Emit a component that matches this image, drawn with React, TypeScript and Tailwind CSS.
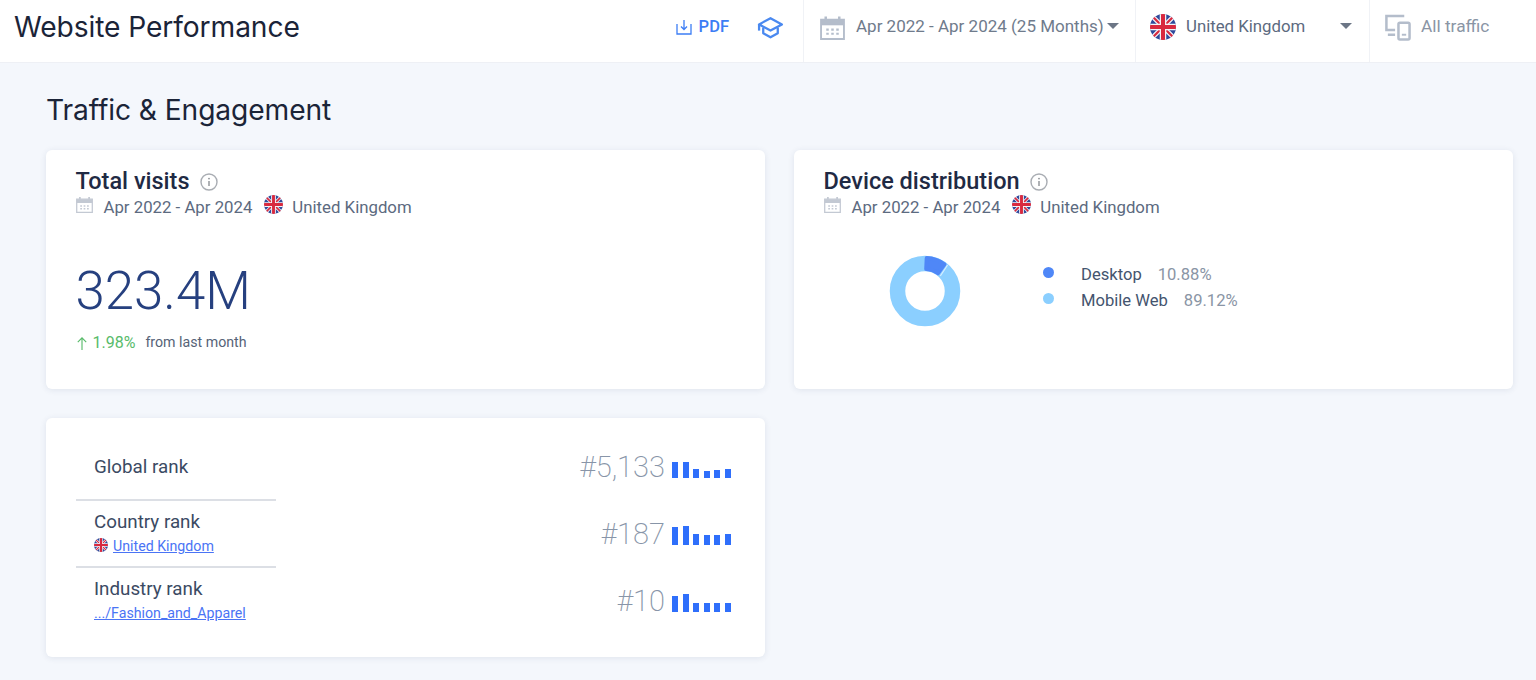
import React from "react";

function UkFlag({ className }: { className: string }) {
  return (
    <svg viewBox="0 0 26 26" className={`rounded-full shrink-0 ${className}`}>
      <rect width="26" height="26" fill="#2f4a9b" />
      <path d="M0 0L26 26M26 0L0 26" stroke="#f3f4f8" strokeWidth="4.5" />
      <path d="M0 0L26 26M26 0L0 26" stroke="#d8293f" strokeWidth="2.2" />
      <path d="M13 0V26M0 13H26" stroke="#f3f4f8" strokeWidth="6.5" />
      <path d="M13 0V26M0 13H26" stroke="#d8293f" strokeWidth="4" />
    </svg>
  );
}

function CalendarIcon({ className }: { className: string }) {
  return (
    <svg viewBox="0 0 24 24" fill="none" className={className}>
      <path d="M1 4.5H23V23H1Z" stroke="currentColor" strokeWidth="1.8" />
      <path d="M1 9H23" stroke="currentColor" strokeWidth="1.8" />
      <path d="M1 4.5H23V9H1Z" fill="currentColor" />
      <path d="M5.5 1.5V5M18.5 1.5V5" stroke="currentColor" strokeWidth="2.4" />
      <path
        d="M6 13h2.4v2H6zM10.8 13h2.4v2h-2.4zM15.6 13H18v2h-2.4zM6 17h2.4v2H6zM10.8 17h2.4v2h-2.4zM15.6 17H18v2h-2.4z"
        fill="currentColor"
      />
    </svg>
  );
}

function InfoIcon() {
  return (
    <svg viewBox="0 0 18 18" fill="none" className="h-[18px] w-[18px] text-[#a9adb3]">
      <circle cx="9" cy="9" r="8" stroke="currentColor" strokeWidth="1.4" />
      <path d="M9 8v5" stroke="#8d9196" strokeWidth="1.4" />
      <circle cx="9" cy="5.6" r="0.9" fill="#8d9196" />
    </svg>
  );
}

function Divider() {
  return <div className="h-full w-px bg-[#f0f2f6]" />;
}

function Header() {
  return (
    <header className="flex h-[63px] items-stretch border-b border-[#eef0f5] bg-white font-['Roboto',sans-serif]">
      <h1 className="ml-[14px] self-center pb-[8px] font-['Inter',sans-serif] text-[28.2px] tracking-[-0.1px] text-[#1b2438]">
        Website Performance
      </h1>
      <div className="ml-auto flex items-center pb-[8px]">
        <svg viewBox="0 0 16 16" fill="none" className="h-[16px] w-[16px] text-[#3c7df5]">
          <path d="M1 5V15H15V5" stroke="currentColor" strokeWidth="1.3" />
          <path d="M8 1V10M5 7.5L8 10.5L11 7.5" stroke="currentColor" strokeWidth="1.3" />
        </svg>
        <span className="ml-[7px] text-[16.5px] font-medium text-[#3c7df5]">PDF</span>
        <svg viewBox="0 0 26 22" fill="none" className="ml-[28px] h-[23px] w-[27px] text-[#4a89f0]">
          <path d="M13 2L24 8L13 14L2 8Z" stroke="currentColor" strokeWidth="2.2" strokeLinejoin="round" />
          <path d="M6 11V16.5L13 20.5L20 16.5V11" stroke="currentColor" strokeWidth="2.2" strokeLinejoin="round" />
          <path d="M2 8V14" stroke="currentColor" strokeWidth="2.2" />
        </svg>
      </div>
      <div className="ml-[19px] flex items-stretch">
        <Divider />
        <div className="flex w-[331px] items-center pb-[8px] pl-[16px]">
          <CalendarIcon className="h-[25px] w-[25px] text-[#b4bdcb]" />
          <span className="ml-[11px] whitespace-nowrap text-[17px] text-[#6f7b8c]">
            Apr 2022 - Apr 2024 (25 Months)
          </span>
          <span className="mb-[3px] ml-[3px] h-0 w-0 border-x-[6px] border-t-[6px] border-x-transparent border-t-[#6c7686]" />
        </div>
        <Divider />
        <div className="flex w-[233px] items-center pb-[8px] pl-[14px]">
          <UkFlag className="h-[26px] w-[26px]" />
          <span className="ml-[10px] text-[16.8px] text-[#5c6a80]">United Kingdom</span>
          <span className="mb-[3px] ml-[35px] h-0 w-0 border-x-[6.5px] border-t-[6px] border-x-transparent border-t-[#6c7686]" />
        </div>
        <Divider />
        <div className="flex w-[166px] items-center pb-[8px] pl-[14px]">
          <svg viewBox="0 0 28 28" fill="none" className="h-[27px] w-[27px] text-[#b4bdcb]">
            <path d="M21 2H2.5V16.5H11.5M4 21.5H11.5" stroke="currentColor" strokeWidth="2.6" />
            <rect x="15" y="9" width="11.5" height="17.5" rx="1.5" stroke="currentColor" strokeWidth="2.6" />
            <path d="M18.5 21.5H23" stroke="currentColor" strokeWidth="2" />
          </svg>
          <span className="ml-[10px] text-[17.3px] text-[#8a95a5]">All traffic</span>
        </div>
      </div>
    </header>
  );
}

function CardTitle({ title }: { title: string }) {
  return (
    <>
      <div className="flex items-center gap-[10px]">
        <h3 className="text-[23.5px] leading-[28px] font-medium text-[#1f2a44]">{title}</h3>
        <div className="mt-[2px]">
          <InfoIcon />
        </div>
      </div>
      <div className="flex items-center text-[16.8px] leading-[22px] text-[#5c6a80]">
        <CalendarIcon className="mb-[5px] h-[17px] w-[17px] text-[#c3c9d3]" />
        <span className="ml-[11px]">Apr 2022 - Apr 2024</span>
        <UkFlag className="mb-[5px] ml-[12px] h-[19px] w-[19px]" />
        <span className="ml-[9px]">United Kingdom</span>
      </div>
    </>
  );
}

function Card({ className, children }: { className: string; children: React.ReactNode }) {
  return (
    <section className={`rounded-[6px] bg-white shadow-[0_1px_6px_rgba(40,60,100,0.1)] ${className}`}>
      {children}
    </section>
  );
}

function Donut() {
  return (
    <svg viewBox="0 0 72 72" className="h-[72px] w-[72px]">
      <circle cx="36" cy="36" r="27.5" fill="none" stroke="#8bcfff" strokeWidth="15.5" />
      <path d="M58.6 10L51.3 21" stroke="#d6eeff" strokeWidth="1.2" />
      <path
        d="M37.7 3.05A33 33 0 0 1 55.4 9.3L48.9 18.2A22 22 0 0 0 37.2 14Z"
        fill="#4f87f7"
        stroke="#4f87f7"
        strokeWidth="4"
        strokeLinejoin="round"
      />
    </svg>
  );
}

const ranks = [
  { label: "Global rank", value: "#5,133", bars: [16, 16, 9, 7, 8, 9] },
  { label: "Country rank", value: "#187", bars: [18, 19, 11, 10, 10, 11], link: "United Kingdom", flag: true },
  { label: "Industry rank", value: "#10", bars: [16, 18, 9, 9, 9, 9], link: ".../Fashion_and_Apparel" },
];

function RankRow({ rank, last }: { rank: (typeof ranks)[number]; last: boolean }) {
  return (
    <div className="flex h-[67px] items-center justify-between">
      <div
        className={`flex h-full w-[200px] flex-col justify-center pl-[18px] ${
          last ? "pb-[2px]" : "border-b-2 border-[#dcdfe5]"
        }`}
      >
        <p className="text-[18.8px] leading-[22px] text-[#3b4a63]">{rank.label}</p>
        {rank.link && (
          <div className="mt-[3px] flex items-center">
            {rank.flag && <UkFlag className="mr-[5px] mb-[3px] h-[14px] w-[14px]" />}
            <a className="text-[14.2px] leading-[20px] text-[#4a74f5] underline">{rank.link}</a>
          </div>
        )}
      </div>
      <div className="flex items-center">
        <span className="text-[29px] leading-none font-extralight text-[#8895a8]">{rank.value}</span>
        <div className="ml-[7px] flex h-[20px] w-[59px] items-end justify-between">
          {rank.bars.map((h, i) => (
            <div key={i} className="w-[6px] bg-[#2f6ffb]" style={{ height: h }} />
          ))}
        </div>
      </div>
    </div>
  );
}

export default function App() {
  return (
    <div className="h-[680px] w-[1536px] overflow-hidden bg-[#f4f7fc] font-['Roboto',sans-serif]">
      <Header />
      <main className="pr-[23px] pl-[46px]">
        <h2 className="mt-[28px] font-['Inter',sans-serif] text-[28.2px] leading-[38px] tracking-[-0.1px] text-[#1b2438]">
          Traffic &amp; Engagement
        </h2>
        <div className="mt-[21px] grid grid-cols-2 gap-x-[29px] gap-y-[29px]">
          <Card className="h-[239px] pt-[17px] pr-[30px] pl-[29.5px]">
            <CardTitle title="Total visits" />
            <p className="mt-[40px] text-[52.8px] leading-[64px] font-light text-[#26407f]">323.4M</p>
            <div className="mt-[8px] flex items-center text-[14.2px]">
              <svg viewBox="0 0 12 16" fill="none" className="h-[15px] w-[12px] text-[#58bb6a]">
                <path d="M6 15V2M1.5 6.5L6 2L10.5 6.5" stroke="currentColor" strokeWidth="1.2" />
              </svg>
              <span className="ml-[5px] text-[16px] text-[#58bb6a]">1.98%</span>
              <span className="ml-[10px] text-[#566377]">from last month</span>
            </div>
          </Card>
          <Card className="h-[239px] pt-[17px] pr-[30px] pl-[29.5px]">
            <CardTitle title="Device distribution" />
            <div className="mt-[36px] flex items-center">
              <div className="ml-[65.5px]">
                <Donut />
              </div>
              <div className="mb-[6px] ml-[82px] text-[16.6px] leading-[26px]">
                <div className="flex items-center">
                  <span className="mb-[5px] h-[11px] w-[11px] rounded-full bg-[#4f87f7]" />
                  <span className="ml-[27px] text-[#44546e]">Desktop</span>
                  <span className="ml-[16px] text-[#8a95a5]">10.88%</span>
                </div>
                <div className="flex items-center">
                  <span className="mb-[5px] h-[11px] w-[11px] rounded-full bg-[#8bcfff]" />
                  <span className="ml-[27px] text-[#44546e]">Mobile Web</span>
                  <span className="ml-[16px] text-[#8a95a5]">89.12%</span>
                </div>
              </div>
            </div>
          </Card>
          <Card className="h-[239px] pt-[16px] pr-[34px] pl-[30px]">
            {ranks.map((r, i) => (
              <RankRow key={r.label} rank={r} last={i === ranks.length - 1} />
            ))}
          </Card>
        </div>
      </main>
    </div>
  );
}
